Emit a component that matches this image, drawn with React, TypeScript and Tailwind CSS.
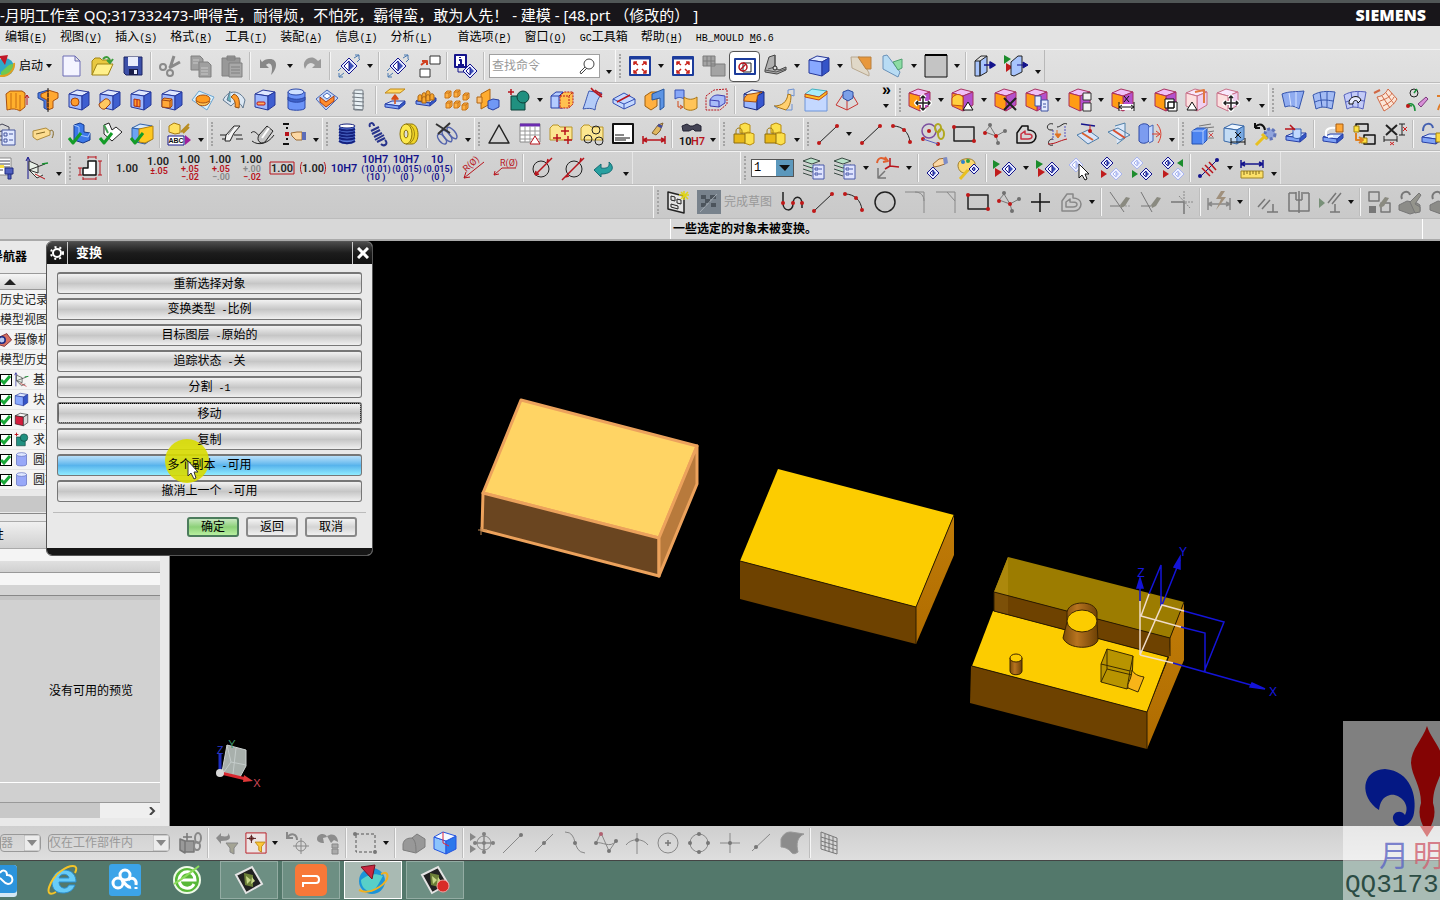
import { type ReactNode } from "react";

const RED = "#b8141c";
const NAVY = "#14148c";

/* ---------- drawing helpers ---------- */

function Cube({ f = "#9db8ff", t = "#dfe8ff", s = "#3f5fd0", k = "#26389a" }) {
  return (
    <g stroke={k} strokeWidth="1" strokeLinejoin="round">
      <path d="M2 6 10 2 22 4 15 8z" fill={t} />
      <path d="M2 6 15 8V22L2 19z" fill={f} />
      <path d="M15 8 22 4V17L15 22z" fill={s} />
    </g>
  );
}

function SyncCube({ pale = false }) {
  return (
    <g strokeLinejoin="round" stroke={pale ? "#c87088" : "#a83060"}>
      <path d="M1 5 10 1l12 3-10 4z" fill={pale ? "#f8e8fc" : "#f0c0f8"} />
      <path d="M12 8 22 4v13l-10 6z" fill={pale ? "#f0d0f0" : "#b450cc"} />
      <path d="M1 5l11 3v15L1 18z" fill={pale ? "#fce0e0" : "#ff9c14"} />
    </g>
  );
}

function Slab({ y = 13, h = 4 }) {
  return (
    <g stroke="#2840a8">
      <path d={`M2 ${y + 3} 9 ${y}H22L16 ${y + 5}z`} fill="#cfe0ff" />
      <path d={`M2 ${y + 3} 16 ${y + 5}V${y + 5 + h}L2 ${y + 3 + h}z`} fill="#7fa2f4" />
      <path d={`M16 ${y + 5} 22 ${y}V${y + h}L16 ${y + 5 + h}z`} fill="#3458c8" />
    </g>
  );
}

function Dots({ d, c = "#c01818" }: { d: number[][]; c?: string }) {
  return (
    <>
      {d.map(([x, y]) => (
        <circle key={`${x}-${y}`} cx={x} cy={y} r="2" fill={c} stroke="none" />
      ))}
    </>
  );
}

function Diamond({ x = 12, y = 12, r = 7, pale = false }) {
  const c = pale ? "#a8b4ee" : NAVY;
  return (
    <g stroke={c}>
      <path d={`M${x} ${y - r} ${x + r} ${y} ${x} ${y + r} ${x - r} ${y}z`} fill={pale ? "#eef0ff" : "#e8ecff"} />
      <path d={`M${x} ${y - r + 3}V${y + r - 3}L${x + r - 3} ${y}z`} fill={pale ? "#b8c4f4" : "#3c50b8"} stroke="none" />
      <path d={`M${x} ${y - r + 3}V${y + r - 3}L${x - r + 3} ${y}z`} fill="#fff" />
    </g>
  );
}

function Flags({ x = 1, y = 3 }) {
  return (
    <g stroke="none">
      <path d={`M${x} ${y}l7 4-7 5z`} fill="#1c8c2c" />
      <path d={`M${x + 2} ${y + 8}l7 4-7 5z`} fill="#c01c1c" />
    </g>
  );
}

function Check() {
  return <path d="M1 16l4 5L13 11" stroke="#149c28" strokeWidth="3" />;
}

function Arrows4({ x = 15, y = 15 }) {
  const d = `M${x - 7} ${y}h14M${x} ${y - 7}v14M${x - 5} ${y - 2}l-2 2 2 2M${x + 5} ${y - 2}l2 2-2 2M${x - 2} ${y - 5}l2-2 2 2M${x - 2} ${y + 5}l2 2 2-2`;
  return (
    <>
      <path d={d} stroke="#fff" strokeWidth="4" />
      <path d={d} stroke="#222" strokeWidth="1.5" />
    </>
  );
}

function Pencil() {
  return <path d="M12 15 18 7l4 1-5 8-4 2z" fill="#8a8a80" stroke="none" />;
}

function Tol({ a, b, c, bc = RED, cc = RED, ac = "#222" }: { a: string; b?: string; c?: string; bc?: string; cc?: string; ac?: string }) {
  const y = c ? 7 : b ? 9 : 16;
  return (
    <g stroke="none" fontFamily="Roboto, sans-serif" textAnchor="middle" fontWeight="600">
      <text x="12" y={y} fontSize="11" fill={ac}>{a}</text>
      {b && <text x="13" y={c ? 16 : 18} fontSize="9" fill={bc}>{b}</text>}
      {c && <text x="13" y="24" fontSize="9" fill={cc}>{c}</text>}
    </g>
  );
}

const sheets = (
  <g stroke="#3a4a44">
    <path d="M1 5 9 2l9 3-8 3zM1 9l9 3 8-3M1 13l9 3 8-3M1 17l9 3" fill="#b8e0c8" />
    <path d="M11 9h11v14H11z" fill="#dfe4ff" stroke="#4858a8" />
    <path d="M13 12h3v2h-3zM13 17h3v2h-3zM17 13h3M17 18h3" stroke="#4858a8" />
  </g>
);

const arc = (
  <>
    <path d="M3 4C12 4 19 10 20 20" />
    <Dots d={[[3, 4], [14, 8], [20, 20]]} />
  </>
);

const line = (
  <>
    <path d="M3 21 21 4" />
    <Dots d={[[3, 21], [21, 4]]} />
  </>
);

const zigzag = (
  <>
    <path d="M2 10 7 4l6 10 9-5M2 10l11 4 2 7" stroke="#777" />
    <Dots d={[[2, 11], [13, 14]]} />
    <Dots d={[[7, 3], [22, 9], [15, 21]]} c="#707070" />
  </>
);

const rectTool = (
  <>
    <path d="M2 5h20v14H2z" strokeWidth="1.5" />
    <Dots d={[[2, 5], [22, 19]]} />
  </>
);

const offsetCurve = (c: string, d: string) => (
  <>
    <path d="M3 21V11L8 4h6v4c4 0 8 2 8 6s-3 7-7 7z" stroke={d} strokeWidth="1.5" />
    <path d="M7 17v-5l4-3v3c4 0 7 0 7 2s-1 3-4 3z" stroke={c} strokeWidth="1.5" />
  </>
);

const boxes = (c: string, s: string) => (
  <g fill={c} stroke={s}>
    {[[0, 3], [9, 2], [18, 5], [1, 13], [9, 13], [17, 15]].map(([x, y]) => (
      <path key={`${x}-${y}`} d={`M${x} ${y + 2}l2-2h4v5l-2 2h-4zM${x} ${y + 2}h4v5M${x + 4} ${y + 2}l2-2`} />
    ))}
  </g>
);

const gridSheet = (c: string, f: string) => (
  <g stroke={c}>
    <path d="M1 7C8 3 15 3 23 4l-3 17c-6-2-10-3-16 0z" fill={f} />
    <path d="M8 4l2 15M15 3l0 16M3 14c6-3 12-2 18-1" />
  </g>
);

const fitWindow = (
  <>
    <path d="M2 3h20v18H2z" fill="#fff" stroke="#1c3c9c" strokeWidth="2" />
    <path d="M2 4h20" stroke="#1c3c9c" strokeWidth="3" />
    <path d="M6 8l4 3M18 8l-4 3M6 19l4-4M18 19l-4-4M6 11V8h3M18 11V8h-3M6 16v3h3M18 16v3h-3" stroke="#c8241c" strokeWidth="1.5" />
  </>
);

const viewDiamond = (
  <>
    <path d="M17 4l5-3M18 1h4v4M20 8l3-3M2 19v4h4M2 23l5-4M1 17l3-3" stroke="#4878b0" />
    <Diamond r={8} />
  </>
);

const datum = (
  <>
    <path d="M3 23V2M1 5l2-4 2 4" stroke={NAVY} />
    <path d="M4 5l9 4v8L4 14zM4 14l16-6M4 14l8 8 6-3" fill="#e8f0e8" stroke="#333" />
    <path d="M17 8l6-1" stroke="#189030" strokeWidth="1.5" />
    <path d="M10 18l10 5" stroke={RED} />
  </>
);

const lockBoxes = (
  <>
    <path d="M8 3l5-2 5 2v8H8zM12 12l4-2 6 2v9l-4 2-6-2z" fill="#fce04c" stroke="#b88c10" />
    <path d="M4 13V9c0-4 6-4 6 0v4" stroke="#a07c10" />
    <path d="M2 12h11v9H2z" fill="#e8b818" stroke="#8c6c10" />
  </>
);

const leafSel = (
  <path d="M1 8c0-5 8-7 10-2l-4 1 1 5c-5 0-7-2-7-4zM11 5c6-4 11 0 11 6l-4-2-3 3z" fill="#8c8c8c" stroke="none" />
);

/* ---------- toolbar icons, 24 x 24 ---------- */

const ICONS: Record<string, ReactNode> = {
  new: <path d="M4 2h12l5 5v15H4zM16 2v5h5" fill="#f4f4ff" stroke="#6c6cb4" />,
  open: (
    <>
      <path d="M2 21V7l3-3h5l2 2h8v5" fill="#e8c840" stroke="#a08414" />
      <path d="M2 21 7 10h16l-5 11z" fill="#fff08c" stroke="#a08414" />
      <path d="M13 5c4-4 7-1 7 3M17 6l3 3 3-4" stroke="#3c9c3c" strokeWidth="2" />
    </>
  ),
  save: (
    <>
      <path d="M3 3h18v18H5l-2-2z" fill="#3c50a8" stroke="#1c2464" />
      <path d="M7 3h10v9H7z" fill="#e8ecfc" stroke="none" />
      <path d="M8 15h9v6H8z" fill="#181c48" stroke="none" />
      <path d="M13 16h3v4h-3z" fill="#e8ecfc" stroke="none" />
    </>
  ),
  cut: (
    <g stroke="#8a8a8a" strokeWidth="2">
      <path d="M12 14 16 2M11 14 22 8" strokeWidth="3" />
      <circle cx="5" cy="13" r="3" />
      <circle cx="12" cy="19" r="3" />
    </g>
  ),
  copy: (
    <g fill="#a0a0a0" stroke="#808080">
      <path d="M2 2h9l3 3v11H2z" />
      <path d="M10 8h9l3 3v12H10z" />
      <path d="M4 6h6M4 9h5M12 14h7M12 17h7M12 20h7" stroke="#c8c8c8" />
    </g>
  ),
  paste: (
    <g fill="#989898" stroke="#808080">
      <path d="M2 4h18v18H2zM7 2h8v4H7z" />
      <path d="M9 9h13v14H9z" fill="#a8a8a8" />
      <path d="M11 13h9M11 16h9M11 19h9" stroke="#808080" />
    </g>
  ),
  undo: <path d="M3 5v9h9l-3-3c4-4 8 0 5 10 8-8 6-17-2-16-3 0-5 1-7 3z" fill="#888" stroke="none" />,
  redo: <path d="M21 5v9h-9l3-3c-4-4-8-2-10 4-4-8 4-13 9-11 2 1 3 2 4 3z" fill="#999" stroke="none" />,
  view: viewDiamond,
  layout: (
    <>
      <path d="M13 2h10v8H13zM3 15h10v8H3z" fill="#fff" stroke="#333" />
      <path d="M4 11l5-4M5 7h5v4" stroke="#d04020" strokeWidth="2" />
    </>
  ),
  info: (
    <>
      <path d="M1 1h11v12H1z" fill="#fff" stroke={NAVY} strokeWidth="2" />
      <path d="M5 6h2v4M4 11h6M6 3v1" stroke={NAVY} strokeWidth="2" />
      <path d="M4 14v4h6" stroke={NAVY} />
      <Diamond x={16} y={17} r={7} />
    </>
  ),
  fit: fitWindow,
  windowsGray: (
    <g fill="#a4a4a4" stroke="#7c7c7c">
      <path d="M1 2h12v10H1zM9 10h14v12H9z" />
      <path d="M5 2v10M9 2v8M1 7h12" />
    </g>
  ),
  section: (
    <>
      <path d="M2 5h20v15H2z" fill="#fff" stroke="#1c3c9c" strokeWidth="2" />
      <path d="M10 9h8v9h-8z" />
      <circle cx="10" cy="13" r="4" stroke={RED} strokeWidth="1.5" />
      <path d="M7 16l6-6" stroke={RED} strokeWidth="1.5" />
    </>
  ),
  wedge: (
    <>
      <path d="M1 16 5 3l6-2v13l4 2 7-3v3l-9 4-12-2z" fill="#b0b0b0" stroke="#444" />
      <path d="M1 16l11 2 10-3M11 1v12L4 15" stroke="#555" />
      <circle cx="11" cy="14" r="2" fill="#ddd" />
    </>
  ),
  cube: <Cube f="#88a8ff" s="#3454c8" />,
  clipOrange: (
    <>
      <path d="M1 3h9l9 16v3L2 14z" fill="#e0d8c8" stroke="#b8a890" />
      <path d="M8 3h13v12h-5z" fill="#e8983c" stroke="#b88040" />
    </>
  ),
  clipBlue: (
    <>
      <path d="M2 2l4-1 13 17-2 5-15-8z" fill="#b8dcf4" stroke="#6890b8" />
      <path d="M12 8l9-3v9l-4 2z" fill="#8cdca4" stroke="#50a070" />
    </>
  ),
  swatch: (
    <>
      <path d="M1 1h22v22H1z" fill="#c4c4c4" stroke="#111" />
      <path d="M1 1h22" stroke="#000" strokeWidth="2" />
    </>
  ),
  door: (
    <>
      <path d="M2 7h5v15H2zM7 7l7-5v16l-7 4z" fill="#a8c4fc" stroke="#222" />
      <path d="M2 7l6-5h6" />
      <path d="M11 11h8M17 8l5 3-5 3z" stroke={NAVY} fill={NAVY} strokeWidth="1.5" />
    </>
  ),
  door2: (
    <>
      <Flags x={0} y={1} />
      <path d="M7 8l7-6h4v16l-8 4-3-1z" fill="#a8c4fc" stroke="#222" />
      <path d="M13 11h8M19 8l5 3-5 3z" stroke={NAVY} fill={NAVY} />
    </>
  ),
  extrude: (
    <>
      <path d="M1 6 5 3h12l3 2v14l-5 4c-5-3-9-2-13-1z" fill="#ffb02c" stroke="#a85010" />
      <path d="M6 5v16M11 5v15M15 7v15" stroke="#c86c10" />
      <path d="M22 17V7M20 10l2-3 2 3" stroke={RED} />
    </>
  ),
  revolve: (
    <>
      <path d="M2 5l10-3v20l-4-2v-7L2 10z" fill="#4c78dc" stroke="#24489c" />
      <path d="M5 6l7-3v18l-1-1v-8L5 9zM12 2l10 3v5l-5 3v7l-5 2z" fill="#ffa830" stroke="#a85010" />
      <path d="M12 0v24" stroke="#222" strokeDasharray="4 1" />
    </>
  ),
  hole: (<><Cube /><circle cx="8" cy="14" r="4" fill="#ff9c2c" stroke="#a04410" /></>),
  boss: (<><Cube /><path d="M1 16l6-5c3-1 6 2 5 5l-5 5c-3 1-6-2-6-5z" fill="#ffc860" stroke="#a04410" /></>),
  pocket: (<><Cube /><path d="M5 11l6 1v7l-6-1z" fill="#ff9c2c" stroke="#a82c10" /><path d="M8 12v6" stroke={RED} /></>),
  pad: (<><Cube /><path d="M2 12l2-2 8 1v7l-2 2-8-1zM2 12l8 1v7M10 13l2-2" fill="#ffa838" stroke="#a04410" /></>),
  emboss: (
    <>
      <path d="M1 12 8 3l15 6-7 13z" fill="#d8f0fc" stroke="#6ca4d0" />
      <path d="M5 12c0 7 12 8 14 1" fill="#ffc858" stroke="#a85010" />
      <ellipse cx="12" cy="11" rx="7" ry="4" fill="#ff9c20" stroke="#a85010" />
    </>
  ),
  arcBand: (
    <>
      <path d="M1 12C6 2 17 1 23 12l-2 8c-3-6-7-8-12-2z" fill="#dce8f4" stroke="#607890" />
      <path d="M12 6c5 2 6 7 5 14l-4-1c1-5-1-8-4-10z" fill="#ff9c2c" stroke="#945010" />
      <path d="M8 3l-3 9 4 2" stroke="#607890" fill="#68b0b8" />
    </>
  ),
  slot: (<><Cube /><rect x="4" y="14" width="8" height="3" rx="1" fill="#ffb060" stroke={RED} /></>),
  cylinder: (
    <g stroke="#2c48a8">
      <path d="M4 4v16c0 3 17 3 17 0V4" fill="#6c94f8" />
      <ellipse cx="12" cy="4" rx="8" ry="3" fill="#cfe0ff" />
      <path d="M4 9c4 3 13 3 17 0v3c-4 3-13 3-17 0z" fill="#3c60c8" />
    </g>
  ),
  dart: (
    <>
      <path d="M1 11 12 2l11 8-12 12z" fill="#c4d8fc" stroke="#4868b8" />
      <path d="M5 9l6 5 8-6v5l-8 6-6-5z" fill="#ff8c2c" stroke="#a83c10" />
      <path d="M8 8l4-3 4 3-4 3z" fill="#fff" stroke="#4868b8" />
    </>
  ),
  thread: (
    <g stroke="#707880">
      <rect x="8" y="2" width="9" height="20" rx="1" fill="#e8f0f4" />
      <path d="M6 5l12 1M6 9l12 1M6 13l12 1M6 17l12 1M7 21l10 1" />
    </g>
  ),
  datumUp: (
    <>
      <Slab y={13} h={3} />
      <path d="M2 5l5-4h15l-5 4z" fill="#ffd860" stroke="#c08818" />
      <path d="M12 16V8M9 11l3-4 3 4z" stroke="#d84c14" fill="#f87c20" strokeWidth="1.5" />
    </>
  ),
  studs: (
    <>
      <Slab y={10} h={3} />
      {[[6, 9], [10, 7], [14, 5], [10, 11], [14, 9], [18, 8]].map(([x, y]) => (
        <path key={`${x}${y}`} d={`M${x - 2} ${y}v4h4v-4c0-3-4-3-4 0z`} fill="#f8a830" stroke="#a86414" />
      ))}
    </>
  ),
  pattern: boxes("#ffb040", "#c87418"),
  mirrorFeat: (
    <>
      <path d="M5 6l9-5v15l-9 5z" fill="#ffac30" stroke="#b06410" />
      <path d="M12 13l5-2 6 1v7l-6 3-5-2z" fill="#7098f4" stroke="#2840a0" />
      <path d="M1 9h5v6H1z" fill="#ffc070" stroke="#b06410" />
    </>
  ),
  unite: (
    <>
      <path d="M4 8h14v14H4z" fill="#209080" stroke="#0c4038" />
      <circle cx="16" cy="9" r="6" fill="#209080" stroke="#0c4038" />
      <path d="M1 4h6M4 1v6" stroke={RED} strokeWidth="1.5" />
    </>
  ),
  trimBody: (
    <>
      <path d="M1 8l5-4h7v16H1z" fill="#b4ccff" stroke="#2840a8" />
      <path d="M1 8h8v12M9 8l4-4" stroke="#2840a8" />
      <path d="M10 8l4-4h9v12l-4 4h-9z" fill="#ffc050" stroke={RED} strokeDasharray="2 1" />
      <path d="M10 8h9v12M19 8l4-4" stroke={RED} strokeDasharray="2 1" />
    </>
  ),
  trimSheet: (
    <>
      <path d="M2 21C5 13 6 8 8 3l13 2c-4 6-6 9-7 17-3-2-7-2-12-1z" fill="#b4ccf8" stroke="#3c58b0" />
      <path d="M10 0c3 4 8 7 11 9M14 2l7 5" stroke={RED} strokeWidth="1.5" />
    </>
  ),
  splitBody: (
    <>
      <path d="M1 11l11-6 11 6v5l-11 5-11-6z" fill="#c4d8ff" stroke="#3450b4" />
      <path d="M1 11l11 5 11-5M12 16v5" stroke="#3450b4" />
      <path d="M5 14 18 7" stroke={RED} strokeWidth="1.5" />
    </>
  ),
  divide: (
    <>
      <path d="M2 8l6-4h6v14l-6 4-6-4z" fill="#ffb040" stroke="#a06010" />
      <path d="M9 6l12-5v18l-4 3V10l-8 2z" fill="#5c94e4" stroke="#24549c" />
    </>
  ),
  thicken: (
    <>
      <path d="M1 2h9v9c-3-2-6-2-9 0z" fill="#88a8f8" stroke="#3450b4" />
      <path d="M10 9c4 3 9 3 13 0v11c-4 3-9 3-13 0z" fill="#ffc458" stroke="#a87414" />
      <path d="M4 13v6h4M6 17l3 2-3 2" stroke="#d04818" />
    </>
  ),
  shell: (
    <>
      <path d="M1 8l8-6 13-1v15l-7 6H1z" stroke={RED} strokeDasharray="2 1" />
      <path d="M5 12c2-4 5-5 8-5l7 1v7l-6 4-9-1zM5 12l9 1v6" fill="#a8bcf8" stroke="#3c3cb0" />
    </>
  ),
  edgeBlend: (
    <>
      <Cube f="#9cb8ff" t="#e8f4ff" s="#3858d0" k="#1c2c80" />
      <path d="M2 12C3 7 6 6 9 6l11-2c-3 1-5 3-5 7l-1 3-12-1z" fill="#ffac38" stroke="#a04c10" />
    </>
  ),
  faceBlend: (
    <>
      <path d="M1 18c8 0 13-4 14-12l3 1c0 8-2 12-5 15z" fill="#ffd070" stroke="#a87414" />
      <path d="M15 6V2l6-1v7l-3-1M1 18l4 3M13 22h6v-6" stroke="#6c90d0" />
    </>
  ),
  chamfer: (
    <>
      <path d="M1 8l14 3 8-6v18H1z" fill="#c4d8ff" stroke="#6c94d8" />
      <path d="M1 6l7-5 15 2-8 6z" fill="#a8ecf8" stroke="#40b0c0" />
      <path d="M1 6l14 3 8-6v3l-8 6L1 9z" fill="#ffc020" stroke="#c04818" />
    </>
  ),
  draft: (
    <>
      <path d="M9 5 1 17l11 5 11-6-6-10M12 12v10" stroke="#c83430" />
      <path d="M8 4l5-2 5 2v6l-5 3-5-3z" fill="#7ca0e8" stroke="#2c4ca0" />
    </>
  ),
  faceMove: (<><SyncCube /><Arrows4 /></>),
  facePull: (<><SyncCube /><path d="M1 10C5 5 9 6 12 9v9L1 17z" fill="#ffd040" stroke="#c05010" /><path d="M12 22l5-8 5 8z" fill="#fff" stroke="#111" /></>),
  faceDelete: (<><SyncCube /><path d="M10 10l12 12M22 10 10 22" stroke="#222" strokeWidth="2" /></>),
  faceCopy: (<><SyncCube /><path d="M10 8h6v10h-6zM16 12h7v11h-7z" fill="#e4ecff" stroke="#3c50a0" /><path d="M18 16h3M18 19h3" stroke="#3c50a0" /></>),
  facePattern: (<><SyncCube /><path d="M15 5h8v7h-8zM15 15h8v8h-8z" fill="#f0f0f0" stroke="#333" /></>),
  faceDim: (<><SyncCube /><path d="M8 16h15v6H8z" fill="#fff" stroke="none" /><path d="M8 14v9M23 14v9M8 19h15M11 17l-3 2 3 2M20 17l3 2-3 2M13 8l5 6M18 8l-5 6" stroke="#111" /></>),
  faceGroup: (<><SyncCube /><path d="M11 11h9v9h-9zM14 14h9v9h-9z" fill="#fff" stroke="#111" /><path d="M14 14h6v6h-6z" stroke="#111" /></>),
  faceOpt: (<><SyncCube pale /><path d="M10 4l9-2v13" stroke="#e07840" strokeWidth="2" /><path d="M2 22l5-8 5 8z" fill="#fff" stroke="#111" /></>),
  faceMovePale: (<><SyncCube pale /><Arrows4 /></>),
  surf1: (<g stroke="#3454ac"><path d="M1 6c7-3 14-2 22-3l-5 18c-4-3-9-4-14-2z" fill="#90acf0" /><path d="M8 5l2 13M15 4v15" stroke="#d8e4ff" /></g>),
  surf2: gridSheet("#3454ac", "#a4bcf4"),
  surf3: (<>{gridSheet("#5460bc", "#c4ccf8")}<path d="M6 16c-1-8 10-10 12-4l-3 3c0-3-5-4-5 1z" fill="#e8ecff" stroke="#111" /></>),
  surfRed: (<g stroke="#d06844"><path d="M3 9C9 8 12 5 14 1l9 10c-3 5-6 8-13 12z" fill="#fbe6d8" /><path d="M6 13c6-2 10-4 12-8M9 18c6-3 9-5 11-9M8 8l8 12M12 5l8 11" /><path d="M0 5l6-3" strokeWidth="2" /></g>),
  curves: (<><circle cx="9" cy="5" r="4" /><path d="M9 5l3-4M2 17c5-3 8 0 8 6M2 17l5 1" stroke="#189038" strokeWidth="1.5" /><path d="M13 16l8-7 2 2-7 8z" fill="#d890d8" stroke="#7c3c7c" /><Dots d={[[3, 18]]} /></>),
  weld: (<path d="M1 8h8V3l7 6M2 22c2-8 6-10 12-10v-3l8 6" stroke="#e07c28" strokeWidth="2" />),
  book: (<><path d="M1 6l8-4 7 3v4M1 10l9-1M1 14h8M1 18h8" stroke="#445" /><path d="M9 8h13v15H9z" fill="#e0e8ff" stroke="#44549c" /><path d="M11 11h3v3h-3zM11 17h3v3h-3zM16 12h4M16 18h4" stroke="#44549c" /></>),
  tag: (<><path d="M2 9l13-3 4 3v4L6 18l-4-3z" fill="#fcdc90" stroke="#b08c3c" /><path d="M19 9c4-3 4 4 2 7M5 12l9-2" stroke="#806420" /></>),
  okBlue: (<><path d="M6 3l6-2 4 2v7l6 1v7l-7 3-9-3z" fill="#3c78e8" stroke="#14388c" /><path d="M6 3l5 2v8l9 2 2-4" stroke="#a4c8ff" /><Check /></>),
  okWhite: (<><path d="M5 3l5-2 3 7 4-3 6 5-10 9-8-7z" fill="#fff" stroke="#222" /><path d="M5 3l4 8" stroke="#40a050" strokeWidth="2" /><Check /></>),
  okYellow: (<><Cube f="#6ca4f4" t="#d4e8ff" s="#fcc424" k="#3060a8" /><path d="M9 7l14-3v13l-8 4-6-1z" fill="#ffc820" stroke="#b08010" /><Check /></>),
  abc: (
    <>
      <path d="M2 4l5-3 6 2v8l-5 1-6-2z" fill="#ffe060" stroke="#a87c10" />
      <path d="M14 10l8-8M16 11l6-6" stroke="#b88c20" strokeWidth="2" />
      <path d="M1 14h16v9H1z" fill="#fff" stroke={NAVY} />
      <path d="M18 13l6 5-6 5z" fill="#a0209c" stroke="none" />
      <text x="9" y="21" fontSize="7" fontWeight="700" textAnchor="middle" stroke="none" fill="#111" fontFamily="Liberation Sans, sans-serif">ABC</text>
    </>
  ),
  flange1: (
    <>
      <path d="M0 13h6M2 17h9M14 13h8M16 17h7" />
      <path d="M6 13 14 4h6l-6 7-4 8H5z" fill="#f4f4f4" stroke="#222" />
      <path d="M14 5 8 13" stroke="#888" />
    </>
  ),
  flange2: (
    <>
      <path d="M0 11c4-4 6 2 9 3M1 19c6 5 16 3 22-6" />
      <path d="M8 13 16 4l6 5-8 11c-5 3-9-2-6-7z" fill="#c4c4c4" stroke="#222" />
      <path d="M18 6l-7 10" stroke="#fff" strokeWidth="2" />
    </>
  ),
  treeHand: (<><path d="M1 2h6M4 6h2M4 17h2M1 22h6" stroke="#111" strokeWidth="2" /><path d="M3 10h4v4H3z" fill={RED} stroke="none" /><path d="M9 11l6-1h5v8h-6l-4-4z" fill="#fcd8a4" stroke="#9c6c34" /><path d="M20 10h4v8h-4z" fill="#5c6cb8" stroke="none" /></>),
  spring: (<g stroke="#14207c"><path d="M4 4v16c3 3 13 3 16 0V4z" fill="#5878d8" stroke="none" /><ellipse cx="12" cy="4" rx="8" ry="2" fill="#fff" /><path d="M4 7c4 2 12 2 16 0M4 10c4 2 12 2 16 0M4 13c4 2 12 2 16 0M4 16c4 2 12 2 16 0M4 19c4 3 12 3 16 0" strokeWidth="2" /></g>),
  springDiag: (<g stroke="#28348c" strokeWidth="2"><path d="M4 5c-2-5 4-5 4-1M5 9l8-4M6 12l8-4M8 15l8-4M9 18l9-5M11 20l8-4M19 18c4 4-1 7-4 4" /></g>),
  coil: (<><path d="M9 2h6c8 1 8 20 0 20H9" fill="#f0d428" stroke="#8c7408" /><path d="M13 3c6 4 6 14 0 18" stroke="#a08810" /><ellipse cx="9" cy="12" rx="6" ry="10" fill="#fce84c" stroke="#8c7408" /><ellipse cx="9" cy="12" rx="2" ry="4" fill="#ddd" stroke="#8c7408" /></>),
  springX: (<><g stroke="#5464ac" strokeWidth="1.5"><ellipse cx="8" cy="17" rx="3" ry="6" transform="rotate(-40 8 17)" /><ellipse cx="13" cy="14" rx="3" ry="7" transform="rotate(-40 13 14)" /><ellipse cx="18" cy="11" rx="3" ry="7" transform="rotate(-40 18 11)" /></g><path d="M2 2l14 9M16 1 4 12" stroke="#333" strokeWidth="2" /></>),
  triangle: <path d="M12 3 22 21H2z" strokeWidth="1.5" />,
  table: (<><path d="M2 2h20v18H2z" fill="#fff" stroke="#888" /><path d="M2 3h20" stroke="#6c2cb0" strokeWidth="3" /><path d="M2 9h20M2 13h20M2 17h20M7 4v16M12 4v16M17 4v16" stroke="#999" /><path d="M12 22l5-8 5 8z" fill="#fff" stroke={RED} /></>),
  folderPts: (<><path d="M1 18V6l3-3h5l2 2h12v13z" fill="#fce690" stroke="#b89428" /><path d="M16 5v8M12 9h8M8 12v8M4 16h8M19 14v8M15 18h8" stroke={RED} strokeWidth="1.5" /></>),
  folderRings: (<><path d="M1 18V6l3-3h5l2 2h12v13z" fill="#fce690" stroke="#b89428" /><g stroke="#222"><circle cx="16" cy="8" r="4" /><circle cx="8" cy="17" r="4" /><circle cx="19" cy="19" r="4" /></g></>),
  note: (<><path d="M2 2h20v19H2z" fill="#fff" stroke="#111" strokeWidth="2" /><path d="M4 13h9M4 16h15M4 18h11" stroke="#111" /></>),
  brushDim: (<><path d="M10 11l6-8 5-2-3 8-4 4z" fill="#e0b860" stroke="#806030" /><path d="M16 3l4 2" stroke="#444c9c" strokeWidth="3" /><path d="M1 14v8M23 14v8M1 18h22M5 16l-4 2 4 2M19 16l4 2-4 2" stroke={RED} strokeWidth="1.5" /></>),
  findDim: (
    <>
      <path d="M3 4l5-2 3 2h3l4-2 4 2v5h-6l-2-2-4 2H4z" fill="#445" stroke="#223" />
      <g stroke="none" fontFamily="Roboto, sans-serif" fontSize="11" fontWeight="600">
        <text x="0" y="23" fill="#111">10</text>
        <text x="12" y="23" fill={RED}>H7</text>
      </g>
    </>
  ),
  lockBoxes,
  line,
  arc,
  chain: (<><circle cx="8" cy="9" r="7" stroke="#7c50a0" strokeWidth="1.5" /><Dots d={[[8, 9], [2, 17], [17, 22]]} /><path d="M2 17l15 5" stroke="#5c60c0" /><g stroke="#b0a820" strokeWidth="2"><ellipse cx="17" cy="6" rx="3" ry="4" /><ellipse cx="20" cy="12" rx="3" ry="5" /></g></>),
  rectTool,
  zigzag,
  offsetRed: offsetCurve("#c83040", "#111"),
  offsetGray: offsetCurve("#888", "#888"),
  project: (<><path d="M8 2C2 0 0 8 6 8h2M8 23c-6 2-6-6 0-6M22 2c-4-2-6 3-10 3" /><path d="M8 8v10M20 4v12" stroke="#5050c0" strokeDasharray="2 1" /><path d="M12 8v6M10 12l3 4 3-4z" stroke="#e07020" fill="#e07020" /><path d="M3 22c8 0 10-3 19-5" stroke={RED} /></>),
  sheetPin: (<><path d="M1 13l11-5 11 8-11 6z" fill="#d8e4f8" stroke="#4c7ca8" /><path d="M6 11l11 7" stroke="#d86030" strokeWidth="2" /><path d="M5 2l14 2" stroke={NAVY} strokeWidth="1.5" /><path d="M14 3v7" stroke="#c02020" /><Dots d={[[14, 9]]} /></>),
  sheetCross: (<><path d="M1 10l10-4 12 7-10 5zM8 4l10-3v15l-8 6" fill="#dce8f8" stroke="#5080a8" /><path d="M6 8l12 8" stroke="#d85030" strokeWidth="2" /></>),
  wrap: (<><path d="M1 4c3-3 8-3 10 0v15c-3 3-8 3-10 0z" fill="#7c9cf0" stroke="#2c48a4" /><path d="M11 5l4-2v16l-4 2" fill="#c4d8ff" stroke="#4464b4" /><path d="M19 2c5 6 5 13 1 19M14 12h7M18 9l4 3-4 3" stroke="#d83c2c" /></>),
  moveBox: (<><path d="M1 9l5-3h10v12l-4 4H1z" fill="#4c84f0" stroke="#2450b0" /><path d="M1 9h11v13M12 9l4-3" stroke="#b8d0ff" /><path d="M8 4l12-2M14 6l9-1M17 10l6-1M17 16h6" stroke="#777" /><path d="M18 11l4 4M22 11l-4 4" stroke="#d05050" /></>),
  dimBox: (<><Cube f="#c4dcf4" t="#eef6ff" s="#78a8e0" k="#3868a8" /><path d="M9 16v7M23 16v7M9 20h14M13 10l6 6M19 10l-6 6" stroke="#111" /></>),
  gear: (<><circle cx="17" cy="12" r="5" fill="#90a4dc" stroke="#6074b8" strokeWidth="3" strokeDasharray="3 2" /><path d="M2 5c5-5 9-2 10 3M2 6V1M2 6h5" stroke="#111" strokeWidth="2" /><path d="M3 23l9-9M9 12l5 5" stroke="#e8c020" strokeWidth="3" /></>),
  feature: (<><Slab y={11} h={4} /><path d="M9 7h8v8c-2 2-6 2-8 0z" fill="#c0d8ff" stroke="#3460b0" /><path d="M1 7h10M6 3l5 5" stroke={RED} strokeWidth="1.5" /></>),
  featureMove: (<><Slab y={12} h={4} /><path d="M15 2h7v8h-7z" fill="#ffa838" stroke="#a85c10" /><path d="M5 14v-4c0-3 5-5 9-4M7 15l5-1" stroke="#fff" strokeWidth="2" /></>),
  reorder: (<><path d="M4 2h12v7H4zM12 13h11v9H12z" stroke="#111" strokeWidth="1.5" /><path d="M2 4h5v6H2zM9 16h6v5H9z" fill="#fce040" stroke="#a08010" /><path d="M4 11v7h5M7 15l4 3-4 3" stroke="#e08020" strokeWidth="2" /></>),
  dimX: (<><path d="M3 3l11 10M14 3 3 13" stroke="#222" strokeWidth="2" /><path d="M1 14v6M14 14v6M1 18h13M16 2h6M16 13h6M19 2v11" stroke="#222" /><path d="M20 5l4 4M24 5l-4 4M7 20l4 3M11 20l-4 3" stroke="#d02020" /></>),
  history: (<><Slab y={12} h={5} /><path d="M3 9c0-9 9-9 10-3" stroke="#4460b0" strokeWidth="2" /><path d="M16 11h8v9h-8z" fill="#fcd840" stroke="#a08010" /></>),
  listSheet: (<><path d="M0 2h18v17H0z" fill="#fff" stroke="#888" /><path d="M1 5h16M1 8h16M1 11h16M1 14h9" stroke="#445" /><path d="M4 9h7v3H4z" fill="#fce040" stroke="none" /><path d="M12 12h8v6h-8zM15 18v5h3v-5" fill="#5060c0" stroke="#202c80" /></>),
  datum,
  dimShape: (<><path d="M5 19v-7h5V5h8v14z" fill="#fff" stroke="#111" strokeWidth="1.5" /><path d="M10 1h8M10 0v3M18 0v3M2 12v7M0 12h4M0 19h4M5 23h13M5 21v3M18 21v3M22 5v14M20 5h4M20 19h4" stroke={RED} /></>),
  t1: <Tol a="1.00" />,
  t2: <Tol a="1.00" b="±.05" />,
  t3: <Tol a="1.00" b="+.05" c="−.02" />,
  t4: <Tol a="1.00" b="+.05" c="−.00" cc="#888" />,
  t5: <Tol a="1.00" b="+.00" c="−.02" bc="#888" />,
  t6: (<><path d="M0 6h24v12H0z" stroke={RED} /><Tol a="1.00" /></>),
  t7: (<><path d="M1 6c-2 3-2 9 0 12M23 6c2 3 2 9 0 12" stroke={RED} /><Tol a="1.00" /></>),
  t8: <Tol a="10H7" ac={NAVY} />,
  t9: <Tol a="10H7" b="(10.01)" c="(10 )" ac={NAVY} bc={NAVY} cc={NAVY} />,
  t10: <Tol a="10H7" b="(0.015)" c="(0 )" ac={NAVY} bc={NAVY} cc={NAVY} />,
  t11: <Tol a="10" b="(0.015)" c="(0 )" ac={NAVY} bc={NAVY} cc={NAVY} />,
  radius1: (
    <>
      <path d="M2 22 22 6M2 22l2-6M2 22l6-1" stroke={RED} />
      <text x="2" y="14" fontSize="9" transform="rotate(-42 6 12)" stroke="none" fill={RED} fontFamily="Roboto, sans-serif">R(Ø)</text>
    </>
  ),
  radius2: (
    <>
      <path d="M1 19 9 12h14M1 19l1-4M1 19l5-1" stroke={RED} />
      <text x="7" y="10" fontSize="9" stroke="none" fill={RED} fontFamily="Roboto, sans-serif">R(Ø)</text>
    </>
  ),
  dia1: (<><circle cx="11" cy="13" r="8" /><path d="M5 19 22 2M5 19l1-4M5 19l4-1M17 7l1-4" stroke={RED} strokeWidth="1.5" /></>),
  dia2: (<><circle cx="13" cy="13" r="8" /><path d="M1 24 23 2M4 21l4-1M19 6l1-4" stroke={RED} strokeWidth="1.5" /></>),
  back: <path d="M2 14l7-6v4c6 1 9-1 8-6 6 5 4 12-8 12v3z" fill="#28a0a0" stroke="#146c74" />,
  sheets,
  csysMove: (<><path d="M1 7c1-6 5-6 9-3M7 6l5-1-3-4" stroke="#e06030" strokeWidth="2" /><path d="M14 2v8l9 1M14 10l-5 3" stroke={RED} strokeWidth="1.5" /><path d="M2 12v10h8M2 22l7-7" stroke="#777" strokeWidth="1.5" /></>),
  handDiamond: (<><Diamond x={8} y={17} r={6} /><path d="M8 8l6-5 7-1-1 6-6 2-5 1z" fill="#fcd8a4" stroke="#9c6c34" /><path d="M18 2l4-1 1 6-4 2z" fill="#7c8cc8" stroke="none" /></>),
  palette: (<><path d="M2 9C2 2 17 0 19 7c1 4-4 3-4 6l-6 4c-4 0-7-3-7-8z" fill="#fcd870" stroke="#a08030" /><Dots d={[[7, 6]]} c="#3080d0" /><Dots d={[[12, 5]]} c="#30a040" /><path d="M4 23l8-9" stroke="#e8c020" strokeWidth="3" /><Diamond x={18} y={13} r={5} /></>),
  flagDiamond: (<><Flags x={0} y={4} /><Diamond x={16} y={13} r={7} /></>),
  pickDiamond: (<><Diamond x={9} y={9} r={7} pale /><path d="M12 8v14l3-3 3 5 2-1-2-5h4z" fill="#fff" stroke="#111" /></>),
  diamonds1: (<><Diamond x={9} y={7} r={6} /><Diamond x={18} y={18} r={6} pale /><path d="M3 14l6 4-6 4z" fill="#c01c1c" stroke="none" /></>),
  diamonds2: (<><Diamond x={8} y={7} r={6} pale /><Diamond x={17} y={18} r={6} /><path d="M3 14l6 4-6 4z" fill="#1c8c2c" stroke="none" /></>),
  diamonds3: (<><Diamond x={8} y={7} r={6} /><Diamond x={18} y={18} r={6} pale /><path d="M3 14l6 4-6 4z" fill="#c01c1c" stroke="none" /><path d="M23 3l-6 4 6 4z" fill="#1c8c2c" stroke="none" /></>),
  ladder: (<><path d="M4 20 20 4" stroke={NAVY} /><path d="M5 12l8 8M8 9l8 8M12 6l7 8" stroke={RED} strokeWidth="1.5" /><Dots d={[[3, 20], [20, 4]]} c={NAVY} /></>),
  ruler: (<><path d="M1 4v8M23 4v8M1 8h22M5 6L1 8l4 2M19 6l4 2-4 2" stroke={NAVY} strokeWidth="1.5" /><path d="M1 15h22v7H1z" fill="#fce068" stroke="#a08424" /><path d="M4 15v4M7 15v3M10 15v4M13 15v3M16 15v4M19 15v3" stroke="#806818" /></>),
  sketch: (<><path d="M2 2l16 4v17L2 19z" fill="#e4e4e4" stroke="#222" strokeWidth="1.5" /><path d="M5 6l4 1v4l-4-1zM11 9l4 1v4l-4-1zM5 14l7 2v3l-7-2z" /><path d="M18 1v9M13 5h10M15 2l7 7M22 2l-7 7" stroke="#e0d418" strokeWidth="1.5" /></>),
  flag: (<><path d="M0 0h24v24H0z" fill="#78828c" stroke="none" /><path d="M4 5h5v4H4zM13 5h6v4h-6zM8 9h5v4H8zM4 13h5v4H4zM14 13h5v4h-5z" fill="#4c545c" stroke="none" /><path d="M3 22 20 4" stroke="#a4acb4" /></>),
  profile: (<><path d="M3 2v11c0 9 10 9 10 1 0-9 9-9 9 0v4" strokeWidth="1.5" /><Dots d={[[3, 13], [13, 13], [22, 13]]} /></>),
  circle: <circle cx="12" cy="12" r="10" strokeWidth="1.5" />,
  fillet: <path d="M1 2h10c6 0 9 4 9 9v12M11 2h9v9" stroke="#888" />,
  chamferCurve: <path d="M1 2h11l8 9v12M12 2h8v9" stroke="#888" />,
  point: <path d="M12 3v19M3 12h19" stroke="#111" strokeWidth="1.5" />,
  quickTrim: (<><path d="M2 2l14 20M2 16h10" stroke="#777" /><path d="M14 16h9" stroke="#999" strokeDasharray="2 1" /><Pencil /></>),
  quickExtend: (<><path d="M2 2l11 20M2 16h10" stroke="#777" /><Pencil /></>),
  corner: (<><path d="M1 12h13v12" stroke="#777" strokeWidth="1.5" /><path d="M14 1v11h10M9 6l11 12" stroke="#888" strokeDasharray="2 1" /></>),
  quickDim: (<><path d="M1 8v12M23 8v12M1 14h22M5 12l-4 2 4 2M19 12l4 2-4 2" stroke="#888" strokeWidth="1.5" /><path d="M14 1l-5 8h5l-5 11 10-13h-5l4-6z" fill="#a0907c" stroke="none" /></>),
  perp: <path d="M2 17 9 9M6 19l8-9M11 22h11M17 14v8" stroke="#777" strokeWidth="1.5" />,
  symmetry: <path d="M2 3h7M2 3v18h7M22 3h-6M22 3v18h-6M9 2v8M15 2v8M12 1v22M9 10h6M8 21h8" stroke="#777" strokeWidth="1.5" />,
  constraint: (<><path d="M1 8l6 5-6 5z" fill="#789078" stroke="none" /><path d="M10 13l8-10M14 14l9-11M12 22h10M17 14v8" stroke="#777" strokeWidth="1.5" /></>),
  convert: (<><path d="M2 2h10v9H2zM14 13h9v9h-9z" stroke="#777" strokeWidth="1.5" /><path d="M2 16h7v7H2z" fill="#777" stroke="none" /><Pencil /></>),
  regen: (<><path d="M1 15l8-4 10 2 3 2v6l-10 3-11-4z" fill="#8c8c88" stroke="#777" /><path d="M4 9C1 2 11-1 12 5" stroke="#777" strokeWidth="2" /><path d="M12 12l9-9 2 2-6 9 5 3v5l-5 1z" fill="#94948c" stroke="#777" /></>),
  assembly: (<><path d="M2 8l5 2v12l-5-3zM7 10h9v11H7M9 2v8M5 6h9" fill="#999" stroke="#777" strokeWidth="1.5" /><ellipse cx="20" cy="7" rx="3" ry="5" stroke="#888" strokeWidth="2" /><ellipse cx="19" cy="15" rx="3" ry="4" stroke="#888" strokeWidth="2" /></>),
  backFilter: (<><path d="M1 7l5-5v3c6 1 8 0 7-3 4 5 2 8-7 8v3z" fill="#8c8c8c" stroke="none" /><path d="M11 12h12l-4 5v6l-4-2v-4z" fill="#a4a494" stroke="#888" /></>),
  snapFilter: (<><path d="M1 1h22v22H1z" fill="#ece4e4" stroke="#b8141c" /><path d="M7 3v9M2 7h10" stroke="#501010" /><circle cx="7" cy="7" r="2" stroke="#501010" /><path d="M11 11h11l-4 5v6l-3-2v-4z" fill="#fcc838" stroke="#c08818" /></>),
  undoSnap: (<><path d="M2 8V1M2 7h6M2 7c4-6 10-4 10 2" stroke="#888" strokeWidth="2" /><circle cx="16" cy="15" r="5" stroke="#888" /><path d="M16 7v16M8 15h16" stroke="#888" /></>),
  leafSel: (<>{leafSel}<path d="M16 13h6v4h-6zM16 18h6v5h-6z" fill="#aaa" stroke="#888" /></>),
  marquee: (<><path d="M3 3h19v18H3z" stroke="#555" strokeDasharray="3 2" /><Dots d={[[2, 3], [22, 21]]} c="#777" /></>),
  solidGray: <path d="M1 13C2 8 6 7 10 7l5-4 8 5v8l-9 6-13-3zM10 7c3 2 4 6 4 14" fill="#989898" stroke="#7c7c7c" />,
  cubeWire: (<><path d="M1 6l12 4v13L1 18z" fill="#8cc4fc" stroke="#2454e0" /><path d="M13 10l10-5v13l-10 5z" fill="#2c78ec" stroke="#2454e0" /><path d="M1 6l9-5 13 4-10 5z" fill="#f4f8ff" stroke="#2454e0" /><path d="M10 1v11l6 3" stroke="#e0243c" /></>),
  snapAll: (<><path d="M0 2l6 4-6 4zM0 14l6 4-6 4z" fill="#888" stroke="none" /><circle cx="14" cy="12" r="7" stroke="#888" /><path d="M14 3v18M5 12h18" stroke="#888" strokeWidth="1.5" /><Dots d={[[14, 3], [14, 21], [5, 12], [23, 12], [14, 12]]} c="#808080" /></>),
  endPoint: (<><path d="M2 22 20 4" stroke="#888" /><Dots d={[[20, 4]]} c="#777" /></>),
  midPoint: (<><path d="M3 21 21 3" stroke="#888" /><Dots d={[[12, 12]]} c="#777" /></>),
  ctrlPoint: (<><path d="M2 1c14 0 6 20 20 21" stroke="#888" /><Dots d={[[12, 12]]} c="#777" /></>),
  knot: (<><path d="M2 12 7 2l8 18 7-10M2 12c6-2 14 6 20-2" stroke="#888" /><Dots d={[[2, 12], [15, 20], [22, 10]]} c="#777" /><Dots d={[[7, 3]]} c="#b06070" /></>),
  intersect: (<><path d="M1 14C6 7 18 7 23 14M12 2v21" stroke="#888" /><Dots d={[[12, 9]]} c="#777" /></>),
  center: (<><circle cx="12" cy="12" r="10" stroke="#888" /><path d="M12 9v6M9 12h6" stroke="#777" strokeWidth="1.5" /></>),
  quadrant: (<><circle cx="12" cy="12" r="9" stroke="#888" /><Dots d={[[12, 3], [12, 21], [3, 12], [21, 12]]} c="#777" /></>),
  existing: (<><path d="M12 2v20M2 12h20" stroke="#888" /><Dots d={[[12, 12]]} c="#777" /></>),
  onCurve: (<><path d="M3 20 21 3" stroke="#888" /><Dots d={[[7, 16]]} c="#777" /></>),
  onFace: <path d="M1 8c3-6 6-7 10-7l13 2c-7 3-8 10-6 18-3 2-4 2-6 1-3-4-7-6-11-6z" fill="#8c8c8c" stroke="#999" />,
  gridPlane: <path d="M4 1l16 6v16L4 18zM4 6l16 5M4 10l16 5M4 14l16 5M8 3v16M12 4v17M16 6v16" stroke="#777" />,
  camera: (<><path d="M0 10l13-6 6 8-9 8-10-3z" fill="#d87060" stroke="#702028" /><circle cx="7" cy="12" r="4" fill="#b8c8f0" stroke="#202c80" strokeWidth="2" /></>),
  kf: (<><Cube f="#d41c3c" t="#f8f8f8" s="#d8d8d8" k="#222" /></>),
  column: (
    <g stroke="#5060b8">
      <path d="M4 4v16c0 3 16 3 16 0V4" fill="#98a8f8" />
      <ellipse cx="12" cy="4" rx="8" ry="3" fill="#e0e8ff" />
    </g>
  ),
};

const svgProps = { fill: "none", stroke: "#222", strokeLinejoin: "round" as const };

function Icon({ name, className = "size-6" }: { name: string; className?: string }) {
  return (
    <svg viewBox="0 0 24 24" className={`${className} shrink-0 overflow-visible`} {...svgProps}>
      {ICONS[name]}
    </svg>
  );
}

/* ---------- toolbar parts ---------- */

function Caret({ low = false }) {
  return (
    <button aria-label="more" className={low ? "flex w-[13px] shrink-0 items-end justify-center pb-2" : "flex w-3 shrink-0 items-center justify-center"}>
      <svg viewBox="0 0 6 4" className="h-1 w-1.5" fill="#111">
        <path d="M0 0h6L3 4z" />
      </svg>
    </button>
  );
}

function Sep() {
  return (
    <span className="flex w-1.5 shrink-0 justify-center py-0.5">
      <span className="w-0.5 border-l border-[#bdbdbd] bg-[#f6f6f6]" />
    </span>
  );
}

function Grip() {
  return (
    <span className="flex w-[9px] shrink-0 items-center justify-center border-l border-white/80">
      <span className="h-6 w-0 border-l-2 border-dotted border-[#a4a4a4]" />
    </span>
  );
}

// "|" separator, "v" caret, "." caret at the end of a bar, "#" grip
function Tools({ list }: { list: string }) {
  return (
    <>
      {list.split(" ").map((item, i) => {
        if (item === "|") return <Sep key={i} />;
        if (item === "v") return <Caret key={i} />;
        if (item === ".") return <Caret key={i} low />;
        if (item === "#") return <Grip key={i} />;
        return (
          <button
            key={i}
            aria-label={item}
            className={
              item === "section"
                ? "flex h-[31px] w-[31px] shrink-0 items-center justify-center self-center rounded-sm border border-[#555] bg-white"
                : "flex w-[31px] shrink-0 items-center justify-center"
            }
          >
            <Icon name={item} />
          </button>
        );
      })}
    </>
  );
}

function Row({ children }: { children: ReactNode }) {
  return <div className="flex h-[34px] shrink-0 overflow-hidden border-t border-[#f2f2f2] border-b border-b-[#bcbcbc]">{children}</div>;
}

// half-width characters take 6px beside 12px ideographs
function Mixed({ text, mark = "" }: { text: string; mark?: string }) {
  return (
    <span className="whitespace-pre">
      {text.split(/([\x20-\x7e]+)/).map((part, i) =>
        /^[\x20-\x7e]/.test(part) ? (
          <span key={i} className="font-['Liberation_Mono',monospace] text-[10px]">
            {mark && part.includes(mark) ? (
              <>
                {part.slice(0, part.lastIndexOf(mark))}
                <u>{mark}</u>
                {part.slice(part.lastIndexOf(mark) + 1)}
              </>
            ) : (
              part
            )}
          </span>
        ) : (
          part
        )
      )}
    </span>
  );
}

const menus = [
  ["编辑(E)", "E"],
  ["视图(V)", "V"],
  ["插入(S)", "S"],
  ["格式(R)", "R"],
  ["工具(T)", "T"],
  ["装配(A)", "A"],
  ["信息(I)", "I"],
  ["分析(L)", "L"],
  ["首选项(P)", "P"],
  ["窗口(O)", "O"],
  ["GC工具箱", ""],
  ["帮助(H)", "H"],
  ["HB_MOULD M6.6", "M"],
];

function Toolbars() {
  return (
    <div className="flex shrink-0 flex-col bg-linear-to-b from-[#e2e2e2] to-[#c9c9c9]">
      <Row>
        <button className="flex items-center">
          <svg viewBox="5 0 19 24" className="h-6 w-[19px]">
            <circle cx="10" cy="13" r="9" fill="#30a8c8" />
            <path d="M6 18c4-3 7-8 12-8 0 8-6 13-12 11z" fill="#70c850" />
            <path d="M5 22c8 1 15-6 14-13" fill="none" stroke="#e0a020" strokeWidth="2" />
            <path d="M4 2l9-1-3 10z" fill="#c01828" />
          </svg>
          <span className="w-6">启动</span>
        </button>
        <Tools list="v new open save | cut copy paste | undo v redo | view v | view layout | info |" />
        <label className="mr-0.5 ml-0.5 flex h-6 w-[111px] shrink-0 items-center self-center border border-[#a0a0a0] bg-white px-0.5">
          <input aria-label="查找命令" placeholder="查找命令" className="w-0 flex-1 bg-transparent outline-none placeholder:text-[#999]" />
          <svg viewBox="0 0 16 16" className="mr-0.5 size-4" fill="none" stroke="#444">
            <circle cx="10" cy="6" r="5" />
            <path d="M6 9l-5 5 1 2 6-6" />
          </svg>
        </label>
        <Tools list=". # fit v fit windowsGray section wedge v cube v clipOrange clipBlue v swatch v | door door2 ." />
        <span className="w-px bg-[#b8b8b8]" />
      </Row>
      <Row>
        <div className="flex pl-px">
          <Tools list="extrude revolve hole boss pocket pad emboss arcBand slot cylinder dart thread | datumUp studs pattern mirrorFeat unite v trimBody trimSheet splitBody divide thicken shell | edgeBlend faceBlend chamfer draft" />
        </div>
        <button className="flex w-[33px] shrink-0 flex-col items-end justify-between px-1 pb-2 text-base leading-3 font-bold">
          »
          <svg viewBox="0 0 6 4" className="mr-0.5 h-1 w-1.5" fill="#111">
            <path d="M0 0h6L3 4z" />
          </svg>
        </button>
        <Tools list="# faceMove v facePull v faceDelete faceCopy v facePattern v faceDim v faceGroup faceOpt faceMovePale v . # surf1 surf2 surf3 surfRed curves weld" />
      </Row>
      <Row>
        <button aria-label="book" className="flex w-[21px] shrink-0 items-center justify-end pr-1">
          <Icon name="book" />
        </button>
        <Tools list="| tag | okBlue okWhite okYellow | abc . # flange1 flange2 treeHand . # spring springDiag coil | springX . # triangle table folderPts folderRings note brushDim | findDim . # lockBoxes lockBoxes . # line v line arc chain rectTool zigzag offsetRed project sheetPin sheetCross wrap . # moveBox dimBox gear feature | featureMove reorder dimX | history" />
      </Row>
      <Row>
        <button aria-label="list" className="flex w-[21px] shrink-0 items-center justify-end pr-1">
          <Icon name="listSheet" />
        </button>
        <Tools list="datum . # dimShape | t1 t2 t3 t4 t5 t6 t7 t8 t9 t10 t11 | radius1 radius2 | dia1 dia2 back ." />
        <span className="mr-[107px] w-px shrink-0 bg-[#e6e6e6]" />
        <Grip />
        <span className="relative mr-1 ml-0.5 flex h-[18px] w-[43px] shrink-0 self-center border border-[#555] bg-white">
          <select aria-label="工作图层" className="w-full appearance-none pl-0.5 font-['Liberation_Mono',monospace] text-xs leading-4 outline-none">
            <option>1</option>
          </select>
          <svg viewBox="0 0 17 16" className="pointer-events-none absolute top-0 right-0 h-4 w-[17px]">
            <path d="M0 0h17v16H0z" fill="#5c98bc" />
            <path d="M3 5h11l-5 6z" fill="#111" />
          </svg>
        </span>
        <Tools list="sheets sheets v csysMove v | handDiamond palette | flagDiamond v flagDiamond pickDiamond diamonds1 diamonds2 diamonds3 | ladder v ruler ." />
        <span className="w-px bg-[#e6e6e6]" />
      </Row>
      <Row>
        <div className="flex pl-[653px]">
          <Tools list="# sketch flag" />
          <button className="w-[52px] shrink-0 text-left text-[#999]">完成草图</button>
          <Tools list="profile line arc circle fillet chamferCurve rectTool zigzag point offsetGray v | quickTrim quickExtend corner | quickDim v | perp symmetry constraint v | convert regen regen" />
        </div>
      </Row>
    </div>
  );
}

/* ---------- left navigator ---------- */

const features = [
  ["datum", "基准"],
  ["cube", "块"],
  ["kf", "KF_"],
  ["unite", "求差"],
  ["column", "圆柱"],
  ["column", "圆柱"],
];

function Navigator() {
  return (
    <aside className="flex w-[170px] shrink-0 flex-col overflow-hidden border-r border-[#888] bg-[#e9e9e9] pr-[9px]">
      <h2 className="flex h-8 w-[27px] shrink-0 items-center justify-end text-xs font-bold whitespace-nowrap">导航器</h2>
      <div className="flex h-[17px] shrink-0 items-center border-y border-[#999] bg-linear-to-b from-[#f6f6f6] to-[#d4d4d4] pl-1">
        <svg viewBox="0 0 12 6" className="h-1.5 w-3">
          <path d="M0 6 6 0l6 6z" fill="#222" />
        </svg>
      </div>
      <ul className="shrink-0 bg-[#f4f4f4] text-[#222]">
        <li className="h-5 border-b border-[#e4e4e4] leading-5">历史记录</li>
        <li className="h-5 border-b border-[#e4e4e4] leading-5">模型视图</li>
        <li className="flex h-5 items-center gap-0.5 border-b border-[#e4e4e4]">
          <svg viewBox="6 2 12 20" className="h-4 w-3" {...svgProps}>
            {ICONS.camera}
          </svg>
          摄像机
        </li>
        <li className="h-5 border-b border-[#e4e4e4] leading-5">模型历史</li>
        {features.map(([icon, name], i) => (
          <li key={i} className="h-5 border-b border-[#e4e4e4]">
            <label className="flex h-full items-center">
              <span className="relative flex">
                <input type="checkbox" defaultChecked className="size-3 appearance-none border border-black bg-white" />
                <svg viewBox="0 0 12 12" className="absolute inset-0 size-3" fill="none" stroke="#18a838" strokeWidth="3">
                  <path d="M1 6l3 3 6-7" />
                </svg>
              </span>
              <Icon name={icon} className="mr-1 ml-0.5 size-[15px]" />
              <Mixed text={name} />
            </label>
          </li>
        ))}
      </ul>
      <div className="mt-1.5 h-4 shrink-0 bg-[#c8c8c8]" />
      <div className="mt-px h-2 shrink-0 border-t border-[#888]" />
      <div className="flex h-7 shrink-0 items-center border-y border-[#aaa] bg-linear-to-b from-[#f0f0f0] to-[#d0d0d0]">
        <span className="flex w-1 justify-end overflow-hidden">性</span>
      </div>
      <div className="h-3 shrink-0 bg-[#f4f4f4]" />
      <div className="h-3 shrink-0 border-b border-[#999] bg-linear-to-b from-[#e0e0e0] to-[#d0d0d0]" />
      <div className="h-3 shrink-0 bg-[#f6f6f6]" />
      <div className="h-[11px] shrink-0 border-b border-[#888] bg-[#d4d4d4]" />
      <div className="flex flex-1 items-center justify-center border-t-4 border-b border-t-[#c4c4c4] border-b-white bg-[#d1d1d1] pl-[22px] text-black">没有可用的预览</div>
      <div className="h-5 shrink-0 border-b border-[#999] bg-[#d0d0d0]" />
      <div className="mb-2 flex h-[15px] shrink-0 items-center justify-between bg-[#efefef]">
        <span className="h-full w-[100px] bg-[#c8c8c8]" />
        <button aria-label="right" className="pr-1">
          <svg viewBox="0 0 8 8" className="size-2" fill="none" stroke="#444" strokeWidth="2">
            <path d="M2 0l4 4-4 4" />
          </svg>
        </button>
      </div>
    </aside>
  );
}

/* ---------- graphics window ---------- */

function Viewport() {
  return (
    <svg viewBox="170 241 1270 585" preserveAspectRatio="xMinYMin slice" className="h-full w-0 flex-1 bg-black" fill="none">
      <defs>
        <linearGradient id="cone" x1="0" x2="1">
          <stop offset="0" stopColor="#7c4c08" />
          <stop offset=".4" stopColor="#b87420" />
          <stop offset="1" stopColor="#6c4004" />
        </linearGradient>
        <linearGradient id="side" x1="0" y1="0" x2="0" y2="1">
          <stop offset="0" stopColor="#c07c08" />
          <stop offset="1" stopColor="#b06c00" />
        </linearGradient>
      </defs>

      <g stroke="#eca25c" strokeWidth="3" strokeLinejoin="round">
        <path d="M521 400 697 446 659 538 483 493z" fill="#ffd464" />
        <path d="M483 493 659 538V576L482 530z" fill="#6a4520" />
        <path d="M697 446V484L659 576V538z" fill="#b87a3c" />
      </g>
      <path d="M478 530h9M481 527v8" stroke="#c08850" />

      <path d="M778 469 954 515 916 607 740 561z" fill="#fccc00" />
      <path d="M740 561 916 607V644L740 599z" fill="#6e4200" />
      <path d="M954 515V555L916 644V607z" fill="url(#side)" />
      <path d="M740 561 916 607 954 515M916 607V644" stroke="#2c1c00" />

      <path d="M993 611 1168 657 1147 712 972 666z" fill="#fccc00" />
      <path d="M971 666 1147 712V749L970 703z" fill="#6e4200" />
      <path d="M1184 602V660L1147 749V712L1169 657 1170 638z" fill="url(#side)" />
      <path d="M1008 557 1184 602 1170 638 994 592z" fill="#9c7c00" />
      <path d="M994 592 1170 638 1169 657 994 611z" fill="#6e4200" />
      <path d="M1008 557V596L994 592z" fill="#ac880c" />
      <path d="M994 592 1008 596V615L994 611z" fill="#7c5008" />
      <path d="M994 611V592L1170 638V656M1170 638 1184 602M994 611 1168 657 1147 712 972 666M1147 712V749" stroke="#2c1c00" />

      <path d="M1067 612C1069 600 1095 600 1097 612V622L1098 640C1095 650 1068 650 1063 638L1067 622z" fill="url(#cone)" stroke="#3c2400" />
      <ellipse cx="1082" cy="621" rx="15" ry="11" fill="#fccc00" stroke="#3c2400" />
      <path d="M1010 658V671C1010 676 1022 676 1022 671V658" fill="url(#cone)" stroke="#3c2400" />
      <ellipse cx="1016" cy="658" rx="6" ry="4" fill="#fccc00" stroke="#3c2400" />

      <g stroke="#3c2c00">
        <path d="M1107 649 1133 656 1132 683 1127 689 1101 682 1101 664z" fill="#b89400" />
        <path d="M1101 664 1130 671 1133 656M1130 671 1127 689M1107 649V669L1132 675M1101 682 1107 669" />
        <path d="M1132 670C1134 674 1138 676 1144 677L1138 692 1128 688C1127 682 1131 682 1132 670z" fill="#f8b418" />
      </g>

      <g stroke="#1414d8" strokeWidth="1.5">
        <path d="M1140 601V580M1162 605 1180 560M1173 663 1258 687M1181 627 1205 633V672M1184 611 1224 622 1204 672M1149 594 1161 565V606" />
        <path d="M1265 689 1250 687 1252 683zM1180 557 1174 567 1180 569zM1137 588 1140 578 1143 588z" fill="#1414d8" />
      </g>
      <path d="M1140 655V601M1140 655 1162 605 1184 611M1140 655 1173 663M1149 594 1141 616 1181 627" stroke="#f0dcc8" strokeWidth="1.5" />
      <g fill="#1818e0" fontFamily="Liberation Sans, sans-serif" fontSize="12" textAnchor="middle">
        <text x="1273" y="696">X</text>
        <text x="1183" y="556">Y</text>
        <text x="1141" y="577">Z</text>
      </g>

      <path d="M227 745 246 750V766L240 777 222 772z" fill="#a8b0ac" stroke="#ccd2d0" />
      <path d="M227 745 231 762 246 765M231 762 224 772M236 748 233 774" stroke="#c4ccca" />
      <path d="M220 771V753" stroke="#1c2cc0" strokeWidth="3" />
      <path d="M221 773 246 779" stroke="#d82830" strokeWidth="3" />
      <path d="M244 775 253 781 243 782z" fill="#e03838" />
      <circle cx="220" cy="773" r="4" fill="#d8d8d8" />
      <g fontFamily="Liberation Sans, sans-serif" fontSize="11" textAnchor="middle">
        <text x="257" y="787" fill="#d04858">X</text>
        <text x="232" y="748" fill="#3c9468">Y</text>
        <text x="220" y="754" fill="#2838c8">Z</text>
      </g>
    </svg>
  );
}

/* ---------- transform dialog ---------- */

const actions = [
  "重新选择对象",
  "变换类型 -比例",
  "目标图层 -原始的",
  "追踪状态 -关",
  "分割 -1",
  "移动",
  "复制",
  "多个副本 -可用",
  "撤消上一个 -可用",
];

function TransformDialog() {
  return (
    <div role="dialog" aria-label="变换" className="absolute top-0 left-[46px] w-[327px] overflow-hidden rounded-md border border-[#555] bg-[#e9e9e9]">
      <div className="flex h-[22px] items-center bg-linear-to-b from-[#4c4c4c] via-[#1c1c1c] to-[#111] text-white">
        <span className="flex h-full w-[21px] items-center justify-center border-r border-[#ccc]">
          <svg viewBox="0 0 14 14" className="size-3.5" fill="none" stroke="#fff">
            <circle cx="7" cy="7" r="4" strokeWidth="2" />
            <circle cx="7" cy="7" r="6" strokeWidth="2" strokeDasharray="2 3" />
          </svg>
        </span>
        <h3 className="flex-1 pl-2 text-[13px] leading-4 font-bold">变换</h3>
        <button aria-label="close" className="flex h-full w-5 items-center justify-center border-l border-[#ccc]">
          <svg viewBox="0 0 12 12" className="size-3" stroke="#fff" strokeWidth="3">
            <path d="M1 1l10 10M11 1 1 11" />
          </svg>
        </button>
      </div>
      <div className="flex flex-col gap-1 px-2.5 pt-2">
        {actions.map((text, i) => (
          <button
            key={text}
            className={`h-[22px] rounded-[3px] border border-t-2 border-[#777] text-xs leading-none ${
              i === 7
                ? "bg-linear-to-b from-[#b8e0fa] via-[#58b4ec] to-[#90ecff]"
                : "bg-linear-to-b from-[#f2f2f2] via-[#c6c6c6] to-[#f0f0f0]"
            } ${i === 5 ? "outline-1 -outline-offset-2 outline-black outline-dotted" : ""}`}
          >
            <span className="relative z-10">
              <Mixed text={text} />
            </span>
          </button>
        ))}
      </div>
      <div className="mx-1.5 mt-2.5 flex justify-end gap-[7px] border-t border-[#bbb] px-[9px] pt-1 pb-[11px]">
        <button className="h-5 w-[52px] rounded-[3px] border-2 border-[#4c7c5c] bg-linear-to-b from-[#c8e8c0] via-[#8cd078] to-[#b8f0a0] leading-4">确定</button>
        <button className="h-5 w-[52px] rounded-[3px] border-2 border-[#888] bg-linear-to-b from-[#f4f4f4] via-[#d4d4d4] to-[#f0f0f0] leading-4">返回</button>
        <button className="h-5 w-[52px] rounded-[3px] border-2 border-[#888] bg-linear-to-b from-[#f4f4f4] via-[#d4d4d4] to-[#f0f0f0] leading-4">取消</button>
      </div>
      <div className="h-[7px] bg-[#161616]" />
      <span className="absolute top-[197px] left-[118px] size-11 rounded-full bg-[#d8dc00]/90" />
      <svg viewBox="0 0 12 20" className="absolute top-[218px] left-[140px] z-20 h-5 w-3" fill="#fff" stroke="#333">
        <path d="M1 1v15l3-3 3 6 2-1-2-6h4z" />
      </svg>
    </div>
  );
}

/* ---------- bottom bars ---------- */

function DropArrow() {
  return (
    <svg viewBox="0 0 16 16" className="pointer-events-none absolute top-0 right-0 size-4">
      <path d="M0 0h16v16H0z" fill="#ececec" stroke="#aaa" />
      <path d="M3 5h10l-5 6z" fill="#888" />
    </svg>
  );
}

function SelectionBar() {
  return (
    <div className="flex h-[35px] shrink-0 overflow-hidden border-b border-[#444] bg-linear-to-b from-[#cfcfcf] to-[#dedede]">
      <span className="relative mr-[7px] flex h-[18px] w-[41px] shrink-0 self-center rounded-sm border border-[#999]">
        <select aria-label="过滤器" className="w-full appearance-none text-xs leading-4 text-[#999] outline-none">
          <option>器</option>
        </select>
        <DropArrow />
      </span>
      <span className="relative mr-1 flex h-[18px] w-[122px] shrink-0 self-center rounded-sm border border-[#999]">
        <select aria-label="选择范围" className="w-full appearance-none text-xs leading-4 text-[#999] outline-none">
          <option>仅在工作部件内</option>
        </select>
        <DropArrow />
      </span>
      <Tools list="assembly | backFilter" />
      <button aria-label="snap filter" className="flex w-[27px] shrink-0 items-center justify-center">
        <Icon name="snapFilter" className="size-[22px]" />
      </button>
      <Tools list="v undoSnap leafSel | marquee v | solidGray cubeWire | snapAll endPoint midPoint ctrlPoint knot intersect center quadrant existing onCurve onFace | gridPlane" />
    </div>
  );
}

function Photo({ dot = false }) {
  return (
    <svg viewBox="0 0 32 32" className="size-8">
      <path d="M3 11 19 3 29 20 13 29z" fill="#222" stroke="#e4e4e4" strokeWidth="2" />
      <path d="M11 9l9 2v12l-8-2z" fill="#6c8038" />
      <path d="M13 12l5 4-4 4zM19 13l3 4-4 3z" fill="#c8d888" />
      {dot && <circle cx="24" cy="22" r="6" fill="#d82c28" stroke="#f0a0a0" />}
    </svg>
  );
}

const apps: { name: string; open?: boolean; active?: boolean; icon: ReactNode }[] = [
  {
    name: "ie",
    icon: (
      <svg viewBox="0 0 32 32" className="size-8" fill="none">
        <path d="M29 18H12c0 7 8 8 10 3h6c-2 6-7 8-12 8C8 29 5 24 5 18 6 10 11 6 17 6c8 0 12 5 12 12zM12 14h10c-1-5-9-5-10 0z" fill="#68ccf8" stroke="#2c90d0" />
        <path d="M9 28C-5 36 3 14 14 7 22 1 33-1 28 9" stroke="#f4c428" strokeWidth="2" />
      </svg>
    ),
  },
  {
    name: "netdisk",
    icon: (
      <svg viewBox="0 0 32 32" className="size-8" fill="none" stroke="#fff" strokeWidth="3">
        <rect width="32" height="32" rx="3" fill="#3ca4e8" stroke="none" />
        <circle cx="16" cy="11" r="5" />
        <circle cx="9" cy="19" r="5" />
        <path d="M13 16c3 4 6 8 9 7M19 16c5-4 9 0 8 5M27 23v2" />
      </svg>
    ),
  },
  {
    name: "browser",
    icon: (
      <svg viewBox="0 0 32 32" className="size-8" fill="none">
        <circle cx="16" cy="16" r="13" fill="#58b838" stroke="#eefae8" strokeWidth="2" />
        <path d="M8 16h16c0-11-15-11-16 0 1 10 12 10 15 4M8 16h8" stroke="#fff" strokeWidth="3" />
        <path d="M3 20C10 16 20 8 28 2" stroke="#8cdc5c" strokeWidth="2" />
      </svg>
    ),
  },
  { name: "player", open: true, icon: <Photo /> },
  {
    name: "presentation",
    open: true,
    icon: (
      <svg viewBox="0 0 32 32" className="size-8" fill="none">
        <rect width="32" height="32" rx="5" fill="#f87838" />
        <path d="M7 12h14c4 0 4 7 0 7H8v4" stroke="#fff" strokeWidth="2" />
      </svg>
    ),
  },
  {
    name: "modeling",
    open: true,
    active: true,
    icon: (
      <svg viewBox="0 0 32 32" className="size-8" fill="none">
        <circle cx="15" cy="17" r="13" fill="#1c94d8" />
        <path d="M4 16c6-4 11-8 22-4-3 4-5 12-12 16-6-1-10-6-10-12z" fill="#58d0c8" />
        <path d="M2 26c12 6 32-8 28-16-1-2-4-1-6 0" stroke="#f0b020" strokeWidth="2" />
        <path d="M4 3 18 1l-3 14z" fill="#c82840" stroke="#781020" />
      </svg>
    ),
  },
  { name: "recorder", open: true, icon: <Photo dot /> },
];

function Taskbar() {
  return (
    <nav className="flex h-[39px] shrink-0 gap-1 overflow-hidden bg-[#53786b]">
      <button aria-label="cloud" className="flex w-[30px] items-center">
        <svg viewBox="0 0 17 32" className="h-8 w-[17px]" fill="none">
          <path d="M0 0h13c3 0 4 1 4 4v24c0 3-1 4-4 4H0z" fill="#d4e8f4" />
          <path d="M0 0h13c3 0 4 1 4 4v20c0 3-1 4-4 4H0z" fill="#2c94dc" />
          <path d="M0 8c2-4 7-3 7 2 7 0 7 9 1 9-4 0-5-4-8-6" stroke="#fff" strokeWidth="2" />
        </svg>
      </button>
      {apps.map((app) => (
        <button
          key={app.name}
          aria-label={app.name}
          className={`flex h-[38px] w-[58px] items-center justify-center ${
            app.active ? "border border-white bg-[#a9bab3]" : app.open ? "border border-[#93aca3] bg-[#6d8f83]" : ""
          }`}
        >
          {app.icon}
        </button>
      ))}
    </nav>
  );
}

function Watermark() {
  return (
    <div className="pointer-events-none absolute right-0 bottom-0 flex h-[179px] w-[97px] flex-col overflow-hidden bg-white/50">
      <svg viewBox="0 0 97 116" className="h-[116px] w-[97px] shrink-0">
        <path d="M84 5C80 18 68 28 68 42c1 14 10 22 10 40-2 6-2 12 0 18l6 15 6-15c2-6 2-12 0-18 0-18 9-26 10-40C100 28 88 18 84 5z" fill="#840404" />
        <path d="M77 105h14l-7 11z" fill="#d88080" />
        <path d="M36 89C16 76 18 49 42 48c26 2 32 28 29 44-2 14-18 18-21 6-1-7 8-10 12-4 6-11-6-22-15-20-8 2-10 8-11 15z" fill="#041884" />
      </svg>
      <div className="flex h-8 shrink-0 gap-1 pl-9 font-['Noto_Sans_CJK_SC',sans-serif] text-[30px] leading-8 whitespace-nowrap">
        <span className="text-[#5c64c4]/80">月</span>
        <span className="text-[#d06070]/80">明</span>
      </div>
      <div className="mt-0.5 pl-0.5 font-['Liberation_Mono',monospace] text-[26px] leading-7 text-[#2c4c44]">QQ3173</div>
    </div>
  );
}

export default function App() {
  return (
    <div className="relative flex h-screen flex-col overflow-hidden bg-[#d8d8d8] font-['Liberation_Sans','Noto_Sans_CJK_SC',sans-serif] text-xs text-black">
      <header className="flex h-[26px] shrink-0 items-center justify-between border-t-3 border-[#505656] bg-[#18161a] pr-3.5 text-white">
        <h1 className="font-['Noto_Sans','Noto_Sans_CJK_SC',sans-serif] text-[15px] leading-5 whitespace-pre">
          -月明工作室 QQ;317332473-呷得苦，耐得烦，不怕死，霸得蛮，敢为人先！ - 建模 - [48.prt （修改的） ]
        </h1>
        <span className="font-['Open_Sans',sans-serif] text-base leading-5 font-extrabold">SIEMENS</span>
      </header>
      <nav className="flex h-[23px] shrink-0 items-center gap-[13px] bg-[#e3e3e3] pl-[5px]">
        {menus.map(([text, mark]) => (
          <button key={text} className={text.startsWith("首选项") ? "ml-3" : ""}>
            <Mixed text={text} mark={mark} />
          </button>
        ))}
      </nav>
      <Toolbars />
      <div className="flex h-[22px] shrink-0 border-b-2 border-[#aaa] bg-[#d8d8d8]">
        <span className="w-[671px] border-r border-white" />
        <p className="flex-1 pl-0.5 leading-5 font-bold">一些选定的对象未被变换。</p>
        <span className="w-[18px] border-l border-white" />
      </div>
      <main className="relative flex min-h-0 flex-1">
        <Navigator />
        <Viewport />
        <TransformDialog />
      </main>
      <SelectionBar />
      <Taskbar />
      <Watermark />
    </div>
  );
}
